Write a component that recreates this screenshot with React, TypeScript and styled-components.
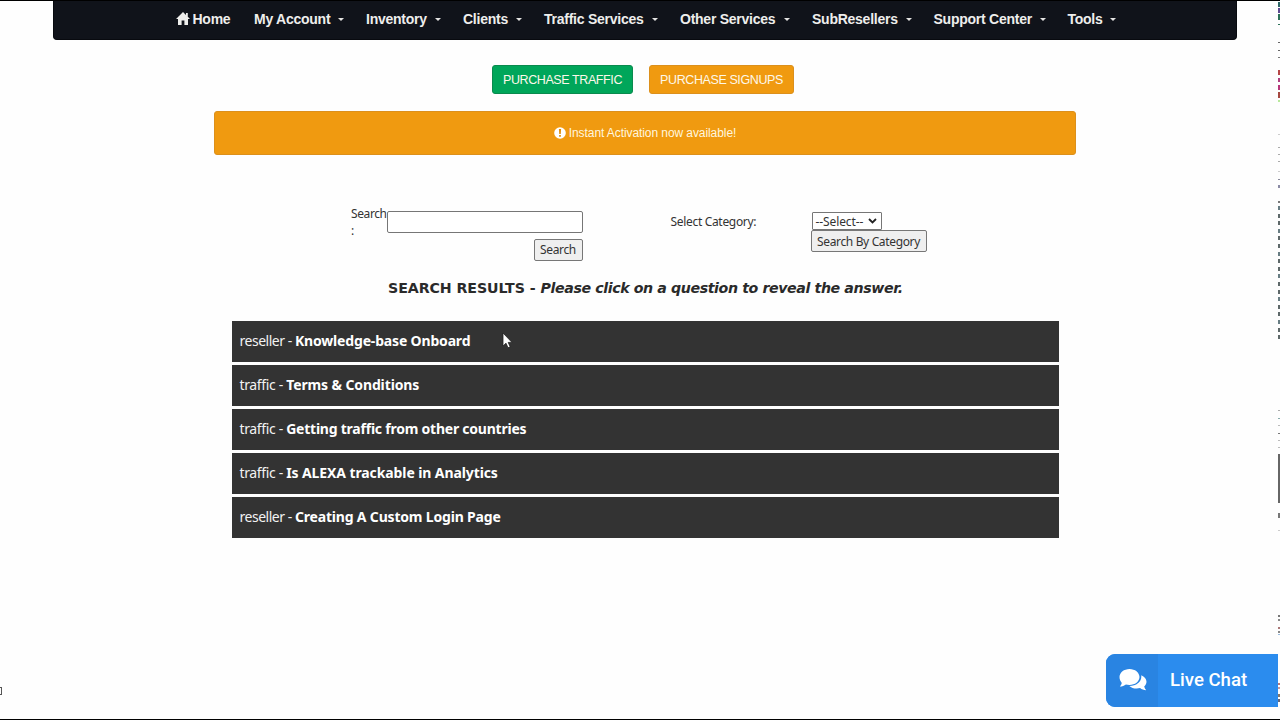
import React from "react";
import styled, { createGlobalStyle } from "styled-components";

const Global = createGlobalStyle`
  * { box-sizing: border-box; }
  html, body { margin: 0; padding: 0; background: #fff; overflow: hidden; }
`;

const Page = styled.div`
  position: relative;
  width: 1280px;
  height: 720px;
  overflow: hidden;
  background: #fefefe;
  border-top: 1px solid #000;
  border-bottom: 1px solid #000;
  font-family: "Noto Sans", "DejaVu Sans", sans-serif;
  font-size: 12px;
  color: #333;
`;

const NavBar = styled.nav`
  display: flex;
  gap: 22px;
  width: 1184px;
  height: 39px;
  margin-left: 53px;
  padding: 0 0 3px 122px;
  align-items: center;
  background: #10131a;
  border: 1px solid #080a0f;
  border-top: 0;
  border-radius: 0 0 4px 4px;
  font: bold 14px "Liberation Sans", Arial, sans-serif;
  letter-spacing: -0.25px;
  color: #eeeeec;
`;

const NavItem = styled.a<{ $w: number }>`
  display: flex;
  align-items: center;
  justify-content: space-between;
  width: ${(p) => p.$w}px;
  white-space: nowrap;
`;

const HomeItem = styled(NavItem)`
  justify-content: flex-start;
  gap: 2.5px;
`;

const Caret = styled.span`
  margin-top: 2px;
  border: 3.5px solid transparent;
  border-top-color: #e4e4e2;
  border-bottom: 0;
`;

const Actions = styled.div`
  display: flex;
  gap: 16px;
  margin: 25px 0 0 492px;
`;

const ActionButton = styled.button<{ $w: number; $bg: string; $edge: string }>`
  width: ${(p) => p.$w}px;
  height: 29px;
  padding: 0;
  border: 1px solid ${(p) => p.$edge};
  border-radius: 3px;
  background: ${(p) => p.$bg};
  color: #fdf8ea;
  font: 12.5px "Liberation Sans", Arial, sans-serif;
  letter-spacing: -0.4px;
  white-space: nowrap;
`;

const Notice = styled.div`
  display: flex;
  align-items: center;
  justify-content: center;
  gap: 3px;
  width: 862px;
  height: 44px;
  margin: 17px 0 0 214px;
  padding-bottom: 1px;
  border: 1px solid #dc901c;
  border-radius: 3px;
  background: #f09a10;
  color: #fff6df;
  font: 12px "Liberation Sans", Arial, sans-serif;
  letter-spacing: -0.08px;
`;

const Filters = styled.div`
  display: flex;
  height: 65px;
  margin: 50px 0 0 351px;
  line-height: 17px;
`;

const SearchLabel = styled.label`
  width: 36px;
  letter-spacing: -0.4px;
`;

const SearchForm = styled.div`
  display: flex;
  flex-direction: column;
  align-items: flex-end;
  gap: 6px;
  width: 195.5px;
  padding-top: 6px;
`;

const SearchInput = styled.input`
  width: 195.5px;
  height: 22px;
  border: 1px solid #767676;
  border-radius: 2px;
  background: #fff;
`;

const FormButton = styled.button<{ $w: number; $drop?: boolean }>`
  width: ${(p) => p.$w}px;
  height: 22px;
  padding: ${(p) => (p.$drop ? "0" : "0 0 1px")};
  border: 1px solid #777;
  border-radius: 2px;
  background: #efefef;
  color: #333;
  font: 12px "Noto Sans", sans-serif;
  letter-spacing: -0.35px;
  white-space: nowrap;
`;

const CategoryLabel = styled.label`
  width: 140px;
  margin-left: 88px;
  padding-top: 8px;
  letter-spacing: -0.32px;
`;

const CategoryForm = styled.div`
  padding-top: 7px;
`;

const SelectBox = styled.div`
  display: flex;
  align-items: center;
  justify-content: space-between;
  width: 70px;
  height: 18px;
  margin-left: 1px;
  padding: 0 4px 0 3px;
  border: 1px solid #767676;
  border-radius: 1px;
  background: #fff;
  letter-spacing: -0.1px;
`;

const Heading = styled.h2`
  display: flex;
  gap: 5px;
  height: 20px;
  margin: 8px 0 0 388px;
  font-family: "DejaVu Sans", sans-serif;
  font-size: 14.2px;
  line-height: 21px;
  letter-spacing: -0.08px;
  color: #2a2a2a;
  white-space: nowrap;
`;

const Hint = styled.em`
  letter-spacing: -0.4px;
`;

const Results = styled.ul`
  display: flex;
  flex-direction: column;
  gap: 3px;
  width: 827px;
  margin: 23px 0 0 232px;
  padding: 0;
  list-style: none;
`;

const Result = styled.li`
  height: 41px;
  padding-left: 7.5px;
  background: #333;
  color: #f2f2f2;
  font-size: 14px;
  line-height: 40px;
  white-space: nowrap;
`;

const Kind = styled.span<{ $ls: number }>`
  letter-spacing: ${(p) => p.$ls}px;
`;

const Title = styled.b<{ $ls: number }>`
  letter-spacing: ${(p) => p.$ls}px;
  color: #fff;
`;

const Chat = styled.div`
  position: absolute;
  right: 2px;
  top: 652.5px;
  display: flex;
  align-items: center;
  width: 172.5px;
  height: 53.5px;
  border-radius: 9px 0 0 9px;
  overflow: hidden;
  background: #2b8cee;
  color: #fff;
  font: 500 18.6px Roboto, sans-serif;
`;

const ChatIcon = styled.div`
  display: flex;
  align-items: center;
  width: 52px;
  height: 100%;
  margin-right: 12.5px;
  padding-left: 13.5px;
  background: #2984e2;
`;

const Edge = styled.svg`
  position: absolute;
  right: 0;
  top: -1px;
`;

const Pointer = styled.svg`
  position: absolute;
  left: 502px;
  top: 331px;
`;

const Stray = styled.span`
  position: absolute;
  left: 0;
  top: 686px;
  width: 2px;
  height: 8px;
  border: solid #555;
  border-width: 1px 1px 1px 0;
`;

const menus: [string, number][] = [
  ["My Account", 90],
  ["Inventory", 75],
  ["Clients", 59],
  ["Traffic Services", 114],
  ["Other Services", 110],
  ["SubResellers", 99.5],
  ["Support Center", 112],
  ["Tools", 48],
];

const results: [string, string, number][] = [
  ["reseller", "Knowledge-base Onboard", -0.17],
  ["traffic", "Terms & Conditions", -0.12],
  ["traffic", "Getting traffic from other countries", -0.23],
  ["traffic", "Is ALEXA trackable in Analytics", -0.1],
  ["reseller", "Creating A Custom Login Page", -0.18],
];

const marks: [number, number, string][] = [
  [2, 5, "#2d6666"], [8, 5, "#5d4a91"], [14, 6, "#2c7058"], [24, 1, "#2c7058"],
  [42, 1, "#666"], [50, 1, "#666"], [57, 1, "#777"],
  [70, 5, "#b64747"], [78, 4, "#ae4080"], [85, 5, "#b7367a"], [92, 6, "#a64841"], [100, 2, "#b9e99c"],
  [134, 1, "#ccc"], [147, 1, "#aaa"], [154, 1, "#aaa"], [161, 1, "#aaa"], [171, 1, "#ccc"],
  [179, 1, "#889"], [185, 3, "#8b8ba5"],
  [201, 2, "#777"],
  ...Array.from({ length: 18 }, (_, i): [number, number, string] => [
    Math.round(206 + i * 7.6), 4, i % 3 ? "#5e6869" : "#687d83",
  ]),
  [410, 1, "#aaa"], [418, 1, "#8aa"], [425, 1, "#bbb"], [433, 1, "#777"], [440, 1, "#bbb"], [447, 1, "#bbb"],
  [454, 49, "#666"], [513, 5, "#777"], [530, 1, "#ccc"],
  [615, 2, "#777"], [619, 2, "#888"], [627, 2, "#a77"], [631, 2, "#888"], [634, 1, "#9bd"],
  [683, 2, "#b77"], [687, 2, "#c99"], [694, 3, "#876"], [699, 3, "#667"],
];

export default function App() {
  return (
    <Page>
      <Global />
      <NavBar>
        <HomeItem $w={56}>
          <svg width="14" height="13" viewBox="0 0 14 13" fill="#eeeeec">
            <path d="M7 0 0 7h2v6h3.600V8.600h2.800V13H12V7h2l-2.200-2.300V1H10v1.900z" />
          </svg>
          <span>Home</span>
        </HomeItem>
        {menus.map(([name, w]) => (
          <NavItem key={name} $w={w}>
            {name}
            <Caret />
          </NavItem>
        ))}
      </NavBar>
      <Actions>
        <ActionButton $w={141} $bg="#00a65a" $edge="#0a8a4e">PURCHASE TRAFFIC</ActionButton>
        <ActionButton $w={145} $bg="#f09a10" $edge="#dc901c">PURCHASE SIGNUPS</ActionButton>
      </Actions>
      <Notice>
        <svg width="12" height="12" viewBox="0 0 12 12">
          <circle cx="6" cy="6" r="5.8" fill="#fff" />
          <path d="M4.9 2h2.200L6.800 7H5.200zM5.100 8h1.800v1.800H5.100z" fill="#e0900f" />
        </svg>
        Instant Activation now available!
      </Notice>
      <Filters>
        <SearchLabel>
          Search
          <br />:
        </SearchLabel>
        <SearchForm>
          <SearchInput />
          <FormButton $w={49}>Search</FormButton>
        </SearchForm>
        <CategoryLabel>Select Category:</CategoryLabel>
        <CategoryForm>
          <SelectBox>
            --Select--
            <svg width="9" height="6" viewBox="0 0 9 6" fill="none" stroke="#222" strokeWidth="1.8">
              <path d="M1 1l3.500 3.500L8 1" />
            </svg>
          </SelectBox>
          <FormButton $w={116} $drop>Search By Category</FormButton>
        </CategoryForm>
      </Filters>
      <Heading>
        <span>SEARCH RESULTS -</span>
        <Hint>Please click on a question to reveal the answer.</Hint>
      </Heading>
      <Results>
        {results.map(([kind, title, ls]) => (
          <Result key={title}>
            <Kind $ls={kind === "traffic" ? -0.35 : -0.48}>{kind} - </Kind>
            <Title $ls={ls}>{title}</Title>
          </Result>
        ))}
      </Results>
      <Pointer width="11" height="17" viewBox="0 0 11 17">
        <path d="M1 1v13l3-2.800 2 4.600 2.200-1-2-4.400H10z" fill="#fff" stroke="#222" strokeWidth=".8" />
      </Pointer>
      <Stray />
      <Chat>
        <ChatIcon>
          <svg width="28" height="23" viewBox="0 0 28 23" fill="#fff">
            <path d="M10.500 0C16 0 20.500 3.600 20.500 8s-4.500 8-10 8c-1.300 0-2.500-.2-3.600-.5C5.300 16.700 3.200 17.600.8 17.600c1-1.100 1.700-2.300 2-3.700C1.400 12.300.5 10.300.5 8c0-4.400 4.500-8 10-8z" />
            <path d="M22.300 6.200c3.100 1.200 5.200 3.700 5.200 6.500 0 1.800-.9 3.500-2.300 4.800.3 1.400 1 2.700 2 3.800-2.400 0-4.500-.9-6.100-2.200-1.100.3-2.200.4-3.400.4-3 0-5.600-1-7.400-2.600 6.700.1 12-3.900 12-8.900 0-.6 0-1.200 0-1.800z" />
          </svg>
        </ChatIcon>
        Live Chat
      </Chat>
      <Edge width="2" height="720">
        {marks.map(([y, h, c]) => (
          <rect key={y} x="0" y={y} width="2" height={h} fill={c} />
        ))}
      </Edge>
    </Page>
  );
}
